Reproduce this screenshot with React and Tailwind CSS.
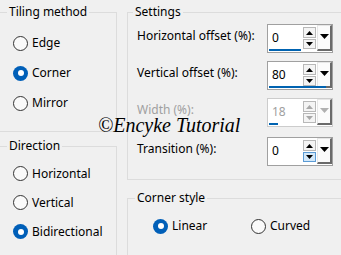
import React from 'react';

const Radio = ({ label, checked, className }) => (
  <div className={className}>
    {checked ? (
      <span className="flex h-[15px] w-[15px] shrink-0 items-center justify-center rounded-full bg-[#005fb8]">
        <span className="h-[6px] w-[6px] rounded-full bg-white" />
      </span>
    ) : (
      <span className="h-[15px] w-[15px] shrink-0 rounded-full border border-[#333333] bg-[#fafafa]" />
    )}
    <span className="ml-[4px]">{label}</span>
  </div>
);

const Arrow = ({ up, color }) => (
  <svg width="7" height="4" viewBox="0 0 7 4">
    <path d={up ? "M3.5 0L7 4H0Z" : "M0 0H7L3.5 4Z"} fill={color} />
  </svg>
);

const Spin = ({ value, barClass, disabled, hot }) => {
  const ink = disabled ? "#a8a8a8" : "#000000";
  return (
    <div
      className={
        disabled
          ? "relative flex h-[29px] w-[66px] shrink-0 border border-[#cccccc] bg-white"
          : "relative flex h-[29px] w-[66px] shrink-0 border border-[#a0a0a0] bg-white"
      }
    >
      <div className={disabled ? "flex-1 pl-[4px] pt-[5px] text-[#a0a0a0]" : "flex-1 pl-[4px] pt-[5px]"}>
        {value}
      </div>
      <div className="flex w-[13px] flex-col gap-[1px] pt-[2px]">
        <span className="flex h-[11px] items-center justify-center border border-[#b8b8b8] bg-[#f4f4f4]">
          <Arrow up color={ink} />
        </span>
        <span
          className={
            hot
              ? "flex h-[10px] items-center justify-center border border-[#5b9bd5] bg-[#d3e8f9]"
              : "flex h-[10px] items-center justify-center border border-[#b8b8b8] bg-[#f4f4f4]"
          }
        >
          <Arrow color={ink} />
        </span>
      </div>
      <div className="ml-[1px] flex h-[26px] w-[15px] justify-center border-t border-l border-r-2 border-b-2 border-t-[#e6e6e6] border-l-[#e6e6e6] border-r-[#6a6a6a] border-b-[#6a6a6a] bg-[#fbfbfb] pt-[8px]">
        <svg width="9" height="5" viewBox="0 0 9 5">
          <path d="M0 0H9L4.5 5Z" fill={disabled ? "#b0b0b0" : "#000000"} />
        </svg>
      </div>
      {barClass && <span className={barClass} />}
    </div>
  );
};

export default function App() {
  return (
    <div className="relative h-[255px] w-[341px] overflow-hidden bg-[#f0f0f0] font-['Noto_Sans',sans-serif] text-[12px] leading-[16px] text-black">
      <div className="flex">
        <div className="-ml-[4px] w-[121px] shrink-0">
          <fieldset className="mt-[4px] h-[128px] border border-[#dcdcdc]">
            <legend className="ml-[10px] px-[2px]">Tiling method</legend>
            <div className="flex flex-col pl-[16px] pt-[8px]">
              <Radio label="Edge" className="flex h-[30px] items-center" />
              <Radio label="Corner" checked className="flex h-[30px] items-center" />
              <Radio label="Mirror" className="flex h-[30px] items-center" />
            </div>
          </fieldset>
          <fieldset className="mt-[6px] h-[140px] border border-[#dcdcdc]">
            <legend className="ml-[10px] px-[2px]">Direction</legend>
            <div className="flex flex-col pl-[16px] pt-[5px]">
              <Radio label="Horizontal" className="flex h-[29px] items-center" />
              <Radio label="Vertical" className="flex h-[29px] items-center" />
              <Radio label="Bidirectional" checked className="flex h-[29px] items-center" />
            </div>
          </fieldset>
        </div>

        <div className="ml-[10px] w-[230px] shrink-0">
          <fieldset className="mt-[4px] h-[176px] border border-[#dcdcdc]">
            <legend className="ml-[5px] px-[2px]">Settings</legend>
            <div className="flex flex-col pl-[9px] pt-[4px]">
              <div className="mb-[8px] flex">
                <div className="w-[130px] pt-[4px]">Horizontal offset (%):</div>
                <Spin value="0" barClass="absolute bottom-[1px] left-[1px] h-[2px] w-[32px] bg-[#0063b1]" />
              </div>
              <div className="mb-[8px] flex">
                <div className="w-[130px] pt-[4px]">Vertical offset (%):</div>
                <Spin value="80" barClass="absolute bottom-[1px] left-[1px] h-[2px] w-[57px] bg-[#0063b1]" />
              </div>
              <div className="mb-[10px] flex">
                <div className="w-[130px] pt-[4px] text-[#a0a0a0]">Width (%):</div>
                <Spin value="18" disabled barClass="absolute bottom-[1px] left-[1px] h-[2px] w-[9px] bg-[#0063b1]" />
              </div>
              <div className="flex">
                <div className="w-[130px] pt-[4px]">Transition (%):</div>
                <Spin value="0" hot />
              </div>
            </div>
          </fieldset>
          <fieldset className="mt-[10px] h-[90px] border border-[#dcdcdc]">
            <legend className="ml-[7px] px-[2px]">Corner style</legend>
            <div className="flex pl-[25px] pt-[5px]">
              <Radio label="Linear" checked className="flex h-[30px] w-[98px] items-center" />
              <Radio label="Curved" className="flex h-[30px] items-center" />
            </div>
          </fieldset>
        </div>
      </div>

      <div className="absolute left-[98px] top-[112px] font-['Liberation_Serif',serif] text-[20px] italic leading-[26px] text-black">
        ©Encyke Tutorial
      </div>
    </div>
  );
}
